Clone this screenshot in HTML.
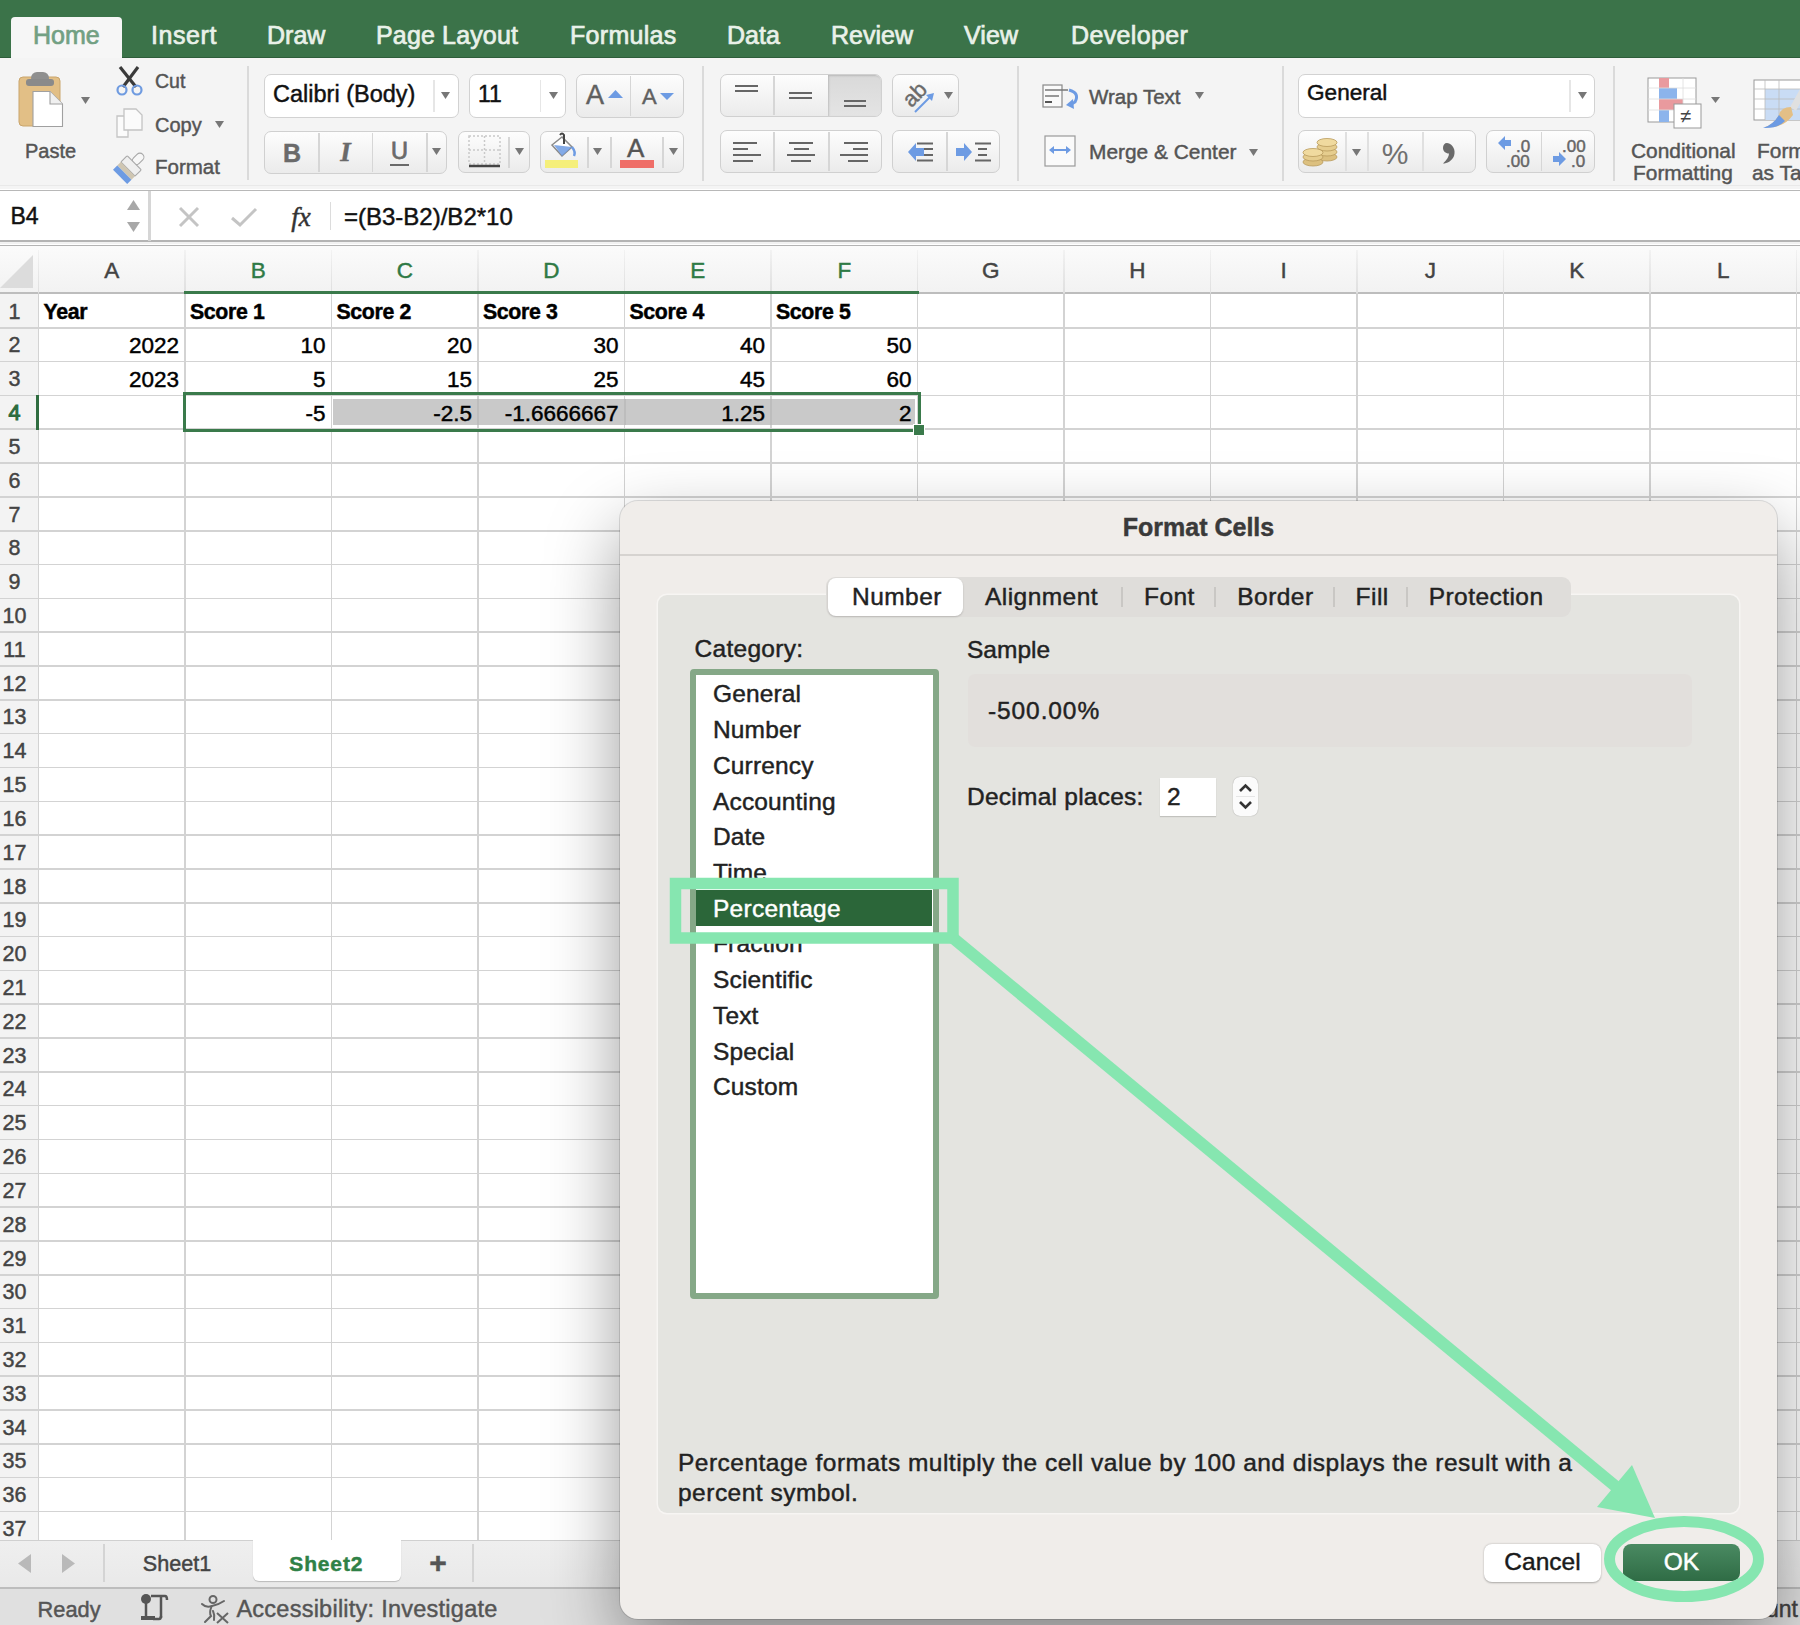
<!DOCTYPE html><html><head><meta charset="utf-8"><style>
html,body{margin:0;padding:0;width:1800px;height:1625px;overflow:hidden;background:#fff;font-family:"Liberation Sans",sans-serif;}
#root{position:relative;width:1800px;height:1625px;overflow:hidden;}
</style></head><body><div id="root">
<div style="position:absolute;left:0.00px;top:0.00px;width:1800.00px;height:58.00px;background:#3b7349;"></div>
<div style="position:absolute;left:0.00px;top:56.50px;width:1800.00px;height:1.50px;background:#2e5d3a;"></div>
<div style="position:absolute;left:11.00px;top:17.00px;width:111.00px;height:41.00px;background:#f6f6f6;border-radius:4px 4px 0 0;"></div>
<div style="position:absolute;top:23.05px;font-size:25px;line-height:25px;font-weight:normal;color:#72a083;white-space:nowrap;font-family:'Liberation Sans', sans-serif;-webkit-text-stroke:0.7px #72a083;left:33.00px;">Home</div>
<div style="position:absolute;top:23.05px;font-size:25px;line-height:25px;font-weight:normal;color:#e9f1e9;white-space:nowrap;font-family:'Liberation Sans', sans-serif;letter-spacing:0.58px;-webkit-text-stroke:0.7px #e9f1e9;left:151.00px;">Insert</div>
<div style="position:absolute;top:23.05px;font-size:25px;line-height:25px;font-weight:normal;color:#e9f1e9;white-space:nowrap;font-family:'Liberation Sans', sans-serif;-webkit-text-stroke:0.7px #e9f1e9;left:267.00px;">Draw</div>
<div style="position:absolute;top:23.05px;font-size:25px;line-height:25px;font-weight:normal;color:#e9f1e9;white-space:nowrap;font-family:'Liberation Sans', sans-serif;letter-spacing:0.15px;-webkit-text-stroke:0.7px #e9f1e9;left:376.00px;">Page Layout</div>
<div style="position:absolute;top:23.05px;font-size:25px;line-height:25px;font-weight:normal;color:#e9f1e9;white-space:nowrap;font-family:'Liberation Sans', sans-serif;letter-spacing:0.3px;-webkit-text-stroke:0.7px #e9f1e9;left:570.00px;">Formulas</div>
<div style="position:absolute;top:23.05px;font-size:25px;line-height:25px;font-weight:normal;color:#e9f1e9;white-space:nowrap;font-family:'Liberation Sans', sans-serif;-webkit-text-stroke:0.7px #e9f1e9;left:727.00px;">Data</div>
<div style="position:absolute;top:23.05px;font-size:25px;line-height:25px;font-weight:normal;color:#e9f1e9;white-space:nowrap;font-family:'Liberation Sans', sans-serif;-webkit-text-stroke:0.7px #e9f1e9;left:831.00px;">Review</div>
<div style="position:absolute;top:23.05px;font-size:25px;line-height:25px;font-weight:normal;color:#e9f1e9;white-space:nowrap;font-family:'Liberation Sans', sans-serif;letter-spacing:0.1px;-webkit-text-stroke:0.7px #e9f1e9;left:964.00px;">View</div>
<div style="position:absolute;top:23.05px;font-size:25px;line-height:25px;font-weight:normal;color:#e9f1e9;white-space:nowrap;font-family:'Liberation Sans', sans-serif;letter-spacing:0.37px;-webkit-text-stroke:0.7px #e9f1e9;left:1071.00px;">Developer</div>
<div style="position:absolute;left:0.00px;top:58.00px;width:1800.00px;height:131.00px;background:#f4f4f4;"></div>
<div style="position:absolute;left:0.00px;top:185.00px;width:1800.00px;height:1.00px;background:#e9e9e9;"></div>
<div style="position:absolute;left:0.00px;top:189.50px;width:1800.00px;height:1.50px;background:#b8b8b8;"></div>
<svg style="position:absolute;left:17px;top:69px" width="50" height="62">
<rect x="2" y="8" width="41" height="49" rx="4" fill="#e2bf86" stroke="#c9a56c" stroke-width="1"/>
<rect x="14" y="3" width="18" height="12" rx="6" fill="#8f8f8f"/>
<rect x="9" y="10" width="28" height="7" rx="3" fill="#8a8a8a"/>
<path d="M16,22.5 L33,22.5 L45.5,35 L45.5,57.5 L16,57.5 Z" fill="#fff" stroke="#a0a0a0" stroke-width="1.1"/>
<path d="M33,22.5 L33,35 L45.5,35" fill="#f0f0f0" stroke="#a0a0a0" stroke-width="1.1"/>
</svg>
<svg style="position:absolute;left:81px;top:97px" width="9" height="7"><polygon points="0,0 9,0 4.5,7" fill="#777"/></svg>
<div style="position:absolute;top:141.40px;font-size:20px;line-height:20px;font-weight:normal;color:#555;white-space:nowrap;font-family:'Liberation Sans', sans-serif;-webkit-text-stroke:0.45px #555;left:25.00px;">Paste</div>
<svg style="position:absolute;left:114px;top:64px" width="34" height="34">
<line x1="6" y1="3" x2="22" y2="23" stroke="#3a3a3a" stroke-width="3.2"/>
<line x1="24" y1="3" x2="9" y2="23" stroke="#3a3a3a" stroke-width="3.2"/>
<circle cx="8" cy="26" r="4.5" fill="none" stroke="#6f9be0" stroke-width="2.2"/>
<circle cx="23" cy="26" r="4.5" fill="none" stroke="#6f9be0" stroke-width="2.2"/>
</svg>
<div style="position:absolute;top:72.20px;font-size:19.5px;line-height:19.5px;font-weight:normal;color:#555;white-space:nowrap;font-family:'Liberation Sans', sans-serif;-webkit-text-stroke:0.45px #555;left:155.00px;">Cut</div>
<svg style="position:absolute;left:114px;top:106px" width="34" height="34">
<path d="M3,10 L14,10 L14,31 L3,31 Z" fill="#fbfbfb" stroke="#c4c4c4" stroke-width="1.3"/>
<path d="M10,3 L22,3 L28,9 L28,24 L10,24 Z" fill="#fbfbfb" stroke="#c4c4c4" stroke-width="1.3"/>
</svg>
<div style="position:absolute;top:115.40px;font-size:20px;line-height:20px;font-weight:normal;color:#555;white-space:nowrap;font-family:'Liberation Sans', sans-serif;-webkit-text-stroke:0.45px #555;left:155.00px;">Copy</div>
<svg style="position:absolute;left:215px;top:121px" width="9" height="7"><polygon points="0,0 9,0 4.5,7" fill="#777"/></svg>
<svg style="position:absolute;left:110px;top:149px" width="40" height="36">
<g transform="rotate(45 20 18)">
<rect x="16" y="0" width="8" height="13" rx="4" fill="#f7f7f7" stroke="#a8a8a8" stroke-width="1.1"/>
<rect x="10" y="12" width="20" height="9" rx="1" fill="#efefef" stroke="#a8a8a8" stroke-width="1.1"/>
<rect x="10" y="21" width="20" height="5" fill="#cfc6b2"/>
<rect x="10" y="26" width="20" height="6" fill="#6d9be3"/>
</g>
</svg>
<div style="position:absolute;top:157.40px;font-size:20.5px;line-height:20.5px;font-weight:normal;color:#555;white-space:nowrap;font-family:'Liberation Sans', sans-serif;-webkit-text-stroke:0.45px #555;left:155.00px;">Format</div>
<div style="position:absolute;left:247.00px;top:66.00px;width:1.50px;height:114.00px;background:#dadada;"></div>
<div style="position:absolute;left:264.00px;top:74.00px;width:195.00px;height:44.00px;box-sizing:border-box;background:#fff;border:1.5px solid #d2d2d2;border-radius:7px;"></div>
<div style="position:absolute;top:82.67px;font-size:23.5px;line-height:23.5px;font-weight:normal;color:#111;white-space:nowrap;font-family:'Liberation Sans', sans-serif;-webkit-text-stroke:0.45px #111;left:273.00px;">Calibri (Body)</div>
<div style="position:absolute;left:433.00px;top:80.00px;width:1.50px;height:32.00px;background:#e6e6e6;"></div>
<svg style="position:absolute;left:441px;top:92px" width="9" height="7"><polygon points="0,0 9,0 4.5,7" fill="#777"/></svg>
<div style="position:absolute;left:469.00px;top:74.00px;width:97.00px;height:44.00px;box-sizing:border-box;background:#fff;border:1.5px solid #d2d2d2;border-radius:7px;"></div>
<div style="position:absolute;top:82.57px;font-size:23px;line-height:23px;font-weight:normal;color:#111;white-space:nowrap;font-family:'Liberation Sans', sans-serif;-webkit-text-stroke:0.45px #111;left:478.00px;">11</div>
<div style="position:absolute;left:539.50px;top:80.00px;width:1.50px;height:32.00px;background:#e6e6e6;"></div>
<svg style="position:absolute;left:549px;top:92px" width="9" height="7"><polygon points="0,0 9,0 4.5,7" fill="#777"/></svg>
<div style="position:absolute;left:576.00px;top:74.00px;width:108.00px;height:44.00px;box-sizing:border-box;background:linear-gradient(#fdfdfd,#ebebeb);border:1.5px solid #d0d0d0;border-radius:7px;"></div>
<div style="position:absolute;left:629.50px;top:76.00px;width:1.50px;height:40.00px;background:#d6d6d6;"></div>
<div style="position:absolute;top:82.43px;font-size:27px;line-height:27px;font-weight:normal;color:#606060;white-space:nowrap;font-family:'Liberation Sans', sans-serif;-webkit-text-stroke:0.45px #606060;left:586.00px;">A</div>
<svg style="position:absolute;left:608px;top:90px" width="15" height="8"><polygon points="0,8 15,8 7.5,0" fill="#6d9be3"/></svg>
<div style="position:absolute;top:86.18px;font-size:22px;line-height:22px;font-weight:normal;color:#606060;white-space:nowrap;font-family:'Liberation Sans', sans-serif;-webkit-text-stroke:0.45px #606060;left:642.00px;">A</div>
<svg style="position:absolute;left:660px;top:93px" width="14" height="7"><polygon points="0,0 14,0 7,7" fill="#6d9be3"/></svg>
<div style="position:absolute;left:264.00px;top:131.00px;width:183.00px;height:43.00px;box-sizing:border-box;background:linear-gradient(#fdfdfd,#ebebeb);border:1.5px solid #d0d0d0;border-radius:7px;"></div>
<div style="position:absolute;left:318.00px;top:133.00px;width:1.50px;height:39.00px;background:#d6d6d6;"></div>
<div style="position:absolute;left:371.50px;top:133.00px;width:1.50px;height:39.00px;background:#d6d6d6;"></div>
<div style="position:absolute;left:426.00px;top:133.00px;width:1.50px;height:39.00px;background:#d6d6d6;"></div>
<div style="position:absolute;top:140.75px;font-size:25px;line-height:25px;font-weight:bold;color:#6a6a6a;white-space:nowrap;font-family:'Liberation Sans', sans-serif;-webkit-text-stroke:0.45px #6a6a6a;left:283.00px;">B</div>
<div style="position:absolute;top:139.13px;font-size:27px;line-height:27px;font-weight:bold;color:#6a6a6a;white-space:nowrap;font-family:'Liberation Serif', serif;-webkit-text-stroke:0.45px #6a6a6a;left:325.50px;width:40px;text-align:center;font-style:italic;">I</div>
<div style="position:absolute;top:140.16px;font-size:23.5px;line-height:23.5px;font-weight:normal;color:#6a6a6a;white-space:nowrap;font-family:'Liberation Sans', sans-serif;-webkit-text-stroke:0.8px #6a6a6a;left:379.50px;width:40px;text-align:center;">U</div>
<div style="position:absolute;left:390.00px;top:163.50px;width:19.00px;height:2.50px;background:#6a6a6a;"></div>
<svg style="position:absolute;left:432px;top:148px" width="9" height="7"><polygon points="0,0 9,0 4.5,7" fill="#777"/></svg>
<div style="position:absolute;left:458.00px;top:131.00px;width:72.00px;height:42.00px;box-sizing:border-box;background:linear-gradient(#fdfdfd,#ebebeb);border:1.5px solid #d0d0d0;border-radius:7px;"></div>
<div style="position:absolute;left:508.00px;top:137.00px;width:1.50px;height:31.00px;background:#d6d6d6;"></div>
<svg style="position:absolute;left:468px;top:134px" width="34" height="34">
<rect x="1" y="2" width="31" height="28" fill="none" stroke="#c9c9c9" stroke-width="1.5" stroke-dasharray="2,2"/>
<line x1="16.5" y1="2" x2="16.5" y2="30" stroke="#c9c9c9" stroke-width="1.5" stroke-dasharray="2,2"/>
<line x1="1" y1="16" x2="32" y2="16" stroke="#c9c9c9" stroke-width="1.5" stroke-dasharray="2,2"/>
<line x1="1" y1="32" x2="32" y2="32" stroke="#444" stroke-width="2.5"/>
</svg>
<svg style="position:absolute;left:515px;top:148px" width="9" height="7"><polygon points="0,0 9,0 4.5,7" fill="#777"/></svg>
<div style="position:absolute;left:540.00px;top:131.00px;width:144.00px;height:42.00px;box-sizing:border-box;background:linear-gradient(#fdfdfd,#ebebeb);border:1.5px solid #d0d0d0;border-radius:7px;"></div>
<div style="position:absolute;left:587.00px;top:137.00px;width:1.50px;height:31.00px;background:#d6d6d6;"></div>
<div style="position:absolute;left:610.00px;top:137.00px;width:1.50px;height:31.00px;background:#d6d6d6;"></div>
<div style="position:absolute;left:662.00px;top:137.00px;width:1.50px;height:31.00px;background:#d6d6d6;"></div>
<div style="position:absolute;left:545.00px;top:160.00px;width:33.00px;height:8.00px;background:#f5ef7a;"></div>
<svg style="position:absolute;left:548px;top:132px" width="32" height="28">
<path d="M4,13 L14,5 L24,15 L14,24 Z" fill="#fff" stroke="#8a8a8a" stroke-width="1.5"/>
<path d="M12,3 Q14,0 16,3 L16,12" fill="none" stroke="#444" stroke-width="2"/>
<path d="M6,13 L24,15 L14,24 Z" fill="#6d9be3" opacity="0.85"/>
<path d="M24,15 Q28,20 26,24" fill="none" stroke="#6d9be3" stroke-width="2.5"/>
</svg>
<svg style="position:absolute;left:593px;top:148px" width="9" height="7"><polygon points="0,0 9,0 4.5,7" fill="#777"/></svg>
<div style="position:absolute;top:134.54px;font-size:26px;line-height:26px;font-weight:normal;color:#555;white-space:nowrap;font-family:'Liberation Sans', sans-serif;-webkit-text-stroke:0.45px #555;left:627.00px;">A</div>
<div style="position:absolute;left:620.00px;top:160.00px;width:34.00px;height:8.00px;background:#ef6e68;"></div>
<svg style="position:absolute;left:669px;top:148px" width="9" height="7"><polygon points="0,0 9,0 4.5,7" fill="#777"/></svg>
<div style="position:absolute;left:702.00px;top:66.00px;width:1.50px;height:115.00px;background:#dadada;"></div>
<div style="position:absolute;left:720.00px;top:74.00px;width:162.00px;height:43.00px;box-sizing:border-box;background:linear-gradient(#fdfdfd,#ebebeb);border:1.5px solid #d0d0d0;border-radius:7px;overflow:hidden;"></div>
<div style="position:absolute;left:828.00px;top:75.00px;width:53.00px;height:41.00px;background:linear-gradient(#d9d9d9,#e4e4e4);border-radius:0 6px 6px 0;box-shadow:inset 1px 1px 2px rgba(0,0,0,0.15);"></div>
<div style="position:absolute;left:773.00px;top:76.00px;width:1.50px;height:39.00px;background:#d6d6d6;"></div>
<div style="position:absolute;left:735.00px;top:85.00px;width:23.00px;height:2.00px;background:#666;"></div>
<div style="position:absolute;left:735.00px;top:90.00px;width:23.00px;height:2.00px;background:#666;"></div>
<div style="position:absolute;left:789.00px;top:92.00px;width:23.00px;height:2.00px;background:#666;"></div>
<div style="position:absolute;left:789.00px;top:97.00px;width:23.00px;height:2.00px;background:#666;"></div>
<div style="position:absolute;left:844.00px;top:99.50px;width:22.00px;height:2.00px;background:#666;"></div>
<div style="position:absolute;left:844.00px;top:105.00px;width:22.00px;height:2.00px;background:#666;"></div>
<div style="position:absolute;left:892.00px;top:74.00px;width:67.00px;height:43.00px;box-sizing:border-box;background:linear-gradient(#fdfdfd,#ebebeb);border:1.5px solid #d0d0d0;border-radius:7px;"></div>
<svg style="position:absolute;left:900px;top:78px" width="40" height="36">
<text x="2" y="24" font-family="Liberation Sans" font-size="22" fill="#6b6b6b" stroke="#6b6b6b" stroke-width="0.4" transform="rotate(-45 14 16)">ab</text>
<line x1="15" y1="34" x2="31" y2="18" stroke="#6d9be3" stroke-width="2"/>
<polygon points="34,15 26,17 32,23" fill="#6d9be3"/>
</svg>
<svg style="position:absolute;left:944px;top:92px" width="9" height="7"><polygon points="0,0 9,0 4.5,7" fill="#777"/></svg>
<div style="position:absolute;left:720.00px;top:130.00px;width:162.00px;height:43.00px;box-sizing:border-box;background:linear-gradient(#fdfdfd,#ebebeb);border:1.5px solid #d0d0d0;border-radius:7px;"></div>
<div style="position:absolute;left:773.00px;top:132.00px;width:1.50px;height:39.00px;background:#d6d6d6;"></div>
<div style="position:absolute;left:828.00px;top:132.00px;width:1.50px;height:39.00px;background:#d6d6d6;"></div>
<div style="position:absolute;left:733.00px;top:142.20px;width:24.00px;height:2.00px;background:#666;"></div>
<div style="position:absolute;left:733.00px;top:147.90px;width:15.00px;height:2.00px;background:#666;"></div>
<div style="position:absolute;left:733.00px;top:153.80px;width:28.00px;height:2.00px;background:#666;"></div>
<div style="position:absolute;left:733.00px;top:159.60px;width:20.00px;height:2.00px;background:#666;"></div>
<div style="position:absolute;left:789.00px;top:142.20px;width:24.00px;height:2.00px;background:#666;"></div>
<div style="position:absolute;left:793.50px;top:147.90px;width:15.00px;height:2.00px;background:#666;"></div>
<div style="position:absolute;left:787.00px;top:153.80px;width:28.00px;height:2.00px;background:#666;"></div>
<div style="position:absolute;left:791.00px;top:159.60px;width:20.00px;height:2.00px;background:#666;"></div>
<div style="position:absolute;left:844.00px;top:142.20px;width:24.00px;height:2.00px;background:#666;"></div>
<div style="position:absolute;left:853.00px;top:147.90px;width:15.00px;height:2.00px;background:#666;"></div>
<div style="position:absolute;left:840.00px;top:153.80px;width:28.00px;height:2.00px;background:#666;"></div>
<div style="position:absolute;left:848.00px;top:159.60px;width:20.00px;height:2.00px;background:#666;"></div>
<div style="position:absolute;left:892.00px;top:130.00px;width:108.00px;height:43.00px;box-sizing:border-box;background:linear-gradient(#fdfdfd,#ebebeb);border:1.5px solid #d0d0d0;border-radius:7px;"></div>
<div style="position:absolute;left:946.00px;top:132.00px;width:1.50px;height:39.00px;background:#d6d6d6;"></div>
<svg style="position:absolute;left:902px;top:139px" width="36" height="26">
<polygon points="14,4 14,9 22,9 22,17 14,17 14,22 6,13" fill="#6d9be3"/>
<rect x="15" y="3.5" width="16" height="2" fill="#666"/>
<rect x="22" y="9" width="9" height="2" fill="#666"/>
<rect x="22" y="15" width="9" height="2" fill="#666"/>
<rect x="15" y="20.5" width="16" height="2" fill="#666"/>
</svg>
<svg style="position:absolute;left:956px;top:139px" width="36" height="26">
<polygon points="8,4 16,13 8,22 8,17 0,17 0,9 8,9" fill="#6d9be3"/>
<rect x="19" y="3.5" width="16" height="2" fill="#666"/>
<rect x="22" y="9" width="9" height="2" fill="#666"/>
<rect x="22" y="15" width="9" height="2" fill="#666"/>
<rect x="19" y="20.5" width="16" height="2" fill="#666"/>
</svg>
<div style="position:absolute;left:1017.00px;top:66.00px;width:1.50px;height:115.00px;background:#dadada;"></div>
<svg style="position:absolute;left:1042px;top:84px" width="40" height="26">
<rect x="1" y="1" width="19" height="22" fill="#fafafa" stroke="#888" stroke-width="1.2"/>
<line x1="3" y1="6" x2="26" y2="6" stroke="#777" stroke-width="1.5"/>
<line x1="3" y1="12" x2="17" y2="12" stroke="#777" stroke-width="1.5"/>
<line x1="3" y1="18" x2="10" y2="18" stroke="#555" stroke-width="2"/>
<path d="M27,6 Q38,9 33,18 L28,21" fill="none" stroke="#6d9be3" stroke-width="3"/>
<polygon points="24,21 31,15 32,25" fill="#6d9be3"/>
</svg>
<div style="position:absolute;top:86.89px;font-size:20.5px;line-height:20.5px;font-weight:normal;color:#555;white-space:nowrap;font-family:'Liberation Sans', sans-serif;-webkit-text-stroke:0.45px #555;left:1089.00px;">Wrap Text</div>
<svg style="position:absolute;left:1195px;top:92px" width="9" height="7"><polygon points="0,0 9,0 4.5,7" fill="#777"/></svg>
<svg style="position:absolute;left:1044px;top:135px" width="34" height="33">
<rect x="1" y="1" width="30" height="30" fill="#fafafa" stroke="#999" stroke-width="1.2"/>
<line x1="7" y1="15" x2="25" y2="15" stroke="#6d9be3" stroke-width="2"/>
<polygon points="5,15 10,11 10,19" fill="#6d9be3"/>
<polygon points="27,15 22,11 22,19" fill="#6d9be3"/>
</svg>
<div style="position:absolute;top:142.17px;font-size:20.9px;line-height:20.9px;font-weight:normal;color:#555;white-space:nowrap;font-family:'Liberation Sans', sans-serif;-webkit-text-stroke:0.45px #555;left:1089.00px;">Merge &amp; Center</div>
<svg style="position:absolute;left:1249px;top:149px" width="9" height="7"><polygon points="0,0 9,0 4.5,7" fill="#777"/></svg>
<div style="position:absolute;left:1282.00px;top:66.00px;width:1.50px;height:115.00px;background:#dadada;"></div>
<div style="position:absolute;left:1298.00px;top:74.00px;width:297.00px;height:44.00px;box-sizing:border-box;background:#fff;border:1.5px solid #d2d2d2;border-radius:7px;"></div>
<div style="position:absolute;top:82.29px;font-size:22.6px;line-height:22.6px;font-weight:normal;color:#111;white-space:nowrap;font-family:'Liberation Sans', sans-serif;-webkit-text-stroke:0.45px #111;left:1307.00px;">General</div>
<div style="position:absolute;left:1569.00px;top:80.00px;width:1.50px;height:32.00px;background:#e6e6e6;"></div>
<svg style="position:absolute;left:1578px;top:92px" width="9" height="7"><polygon points="0,0 9,0 4.5,7" fill="#777"/></svg>
<div style="position:absolute;left:1298.00px;top:130.00px;width:178.00px;height:43.00px;box-sizing:border-box;background:linear-gradient(#fdfdfd,#ebebeb);border:1.5px solid #d0d0d0;border-radius:7px;"></div>
<div style="position:absolute;left:1345.00px;top:132.00px;width:1.50px;height:39.00px;background:#e0e0e0;"></div>
<div style="position:absolute;left:1367.00px;top:132.00px;width:1.50px;height:39.00px;background:#e0e0e0;"></div>
<div style="position:absolute;left:1422.00px;top:132.00px;width:1.50px;height:39.00px;background:#e0e0e0;"></div>
<svg style="position:absolute;left:1301px;top:137px" width="38" height="32">
<g stroke="#b99a5c" stroke-width="0.8">
<ellipse cx="26" cy="20" rx="10" ry="4" fill="#dcc07f"/>
<ellipse cx="26" cy="15" rx="10" ry="4" fill="#e6cd8e"/>
<ellipse cx="26" cy="10" rx="10" ry="4" fill="#e6cd8e"/>
<ellipse cx="26" cy="5.5" rx="10" ry="4" fill="#f0da9f"/>
<ellipse cx="12" cy="25" rx="10" ry="4" fill="#dcc07f"/>
<ellipse cx="12" cy="20" rx="10" ry="4" fill="#e6cd8e"/>
<ellipse cx="12" cy="15.5" rx="10" ry="4" fill="#f0da9f"/>
</g>
</svg>
<svg style="position:absolute;left:1352px;top:149px" width="9" height="7"><polygon points="0,0 9,0 4.5,7" fill="#777"/></svg>
<div style="position:absolute;top:138.70px;font-size:30px;line-height:30px;font-weight:normal;color:#707070;white-space:nowrap;font-family:'Liberation Sans', sans-serif;left:1375.00px;width:40px;text-align:center;">%</div>
<svg style="position:absolute;left:1441px;top:142px" width="18" height="23"><path d="M6,1 C12,2 15,8 13,14 C11,19 6,21.5 2,21.5 C6,18 8,14 8,11.5 C4.5,11.5 2,9 2,6 C2,3 3.5,1 6,1 Z" fill="#6a6a6a"/></svg>
<div style="position:absolute;left:1486.00px;top:130.00px;width:109.00px;height:43.00px;box-sizing:border-box;background:linear-gradient(#fdfdfd,#ebebeb);border:1.5px solid #d0d0d0;border-radius:7px;"></div>
<div style="position:absolute;left:1540.50px;top:132.00px;width:1.50px;height:39.00px;background:#d6d6d6;"></div>
<div style="position:absolute;top:138.23px;font-size:17px;line-height:17px;font-weight:normal;color:#666;white-space:nowrap;font-family:'Liberation Sans', sans-serif;-webkit-text-stroke:0.45px #666;left:1516.00px;">.0</div>
<div style="position:absolute;top:153.23px;font-size:17px;line-height:17px;font-weight:normal;color:#666;white-space:nowrap;font-family:'Liberation Sans', sans-serif;-webkit-text-stroke:0.45px #666;left:1506.00px;">.00</div>
<svg style="position:absolute;left:1498px;top:136px" width="14" height="14"><polygon points="0,7 7,0 7,4 13,4 13,10 7,10 7,14" fill="#6d9be3"/></svg>
<div style="position:absolute;top:138.23px;font-size:17px;line-height:17px;font-weight:normal;color:#666;white-space:nowrap;font-family:'Liberation Sans', sans-serif;-webkit-text-stroke:0.45px #666;left:1562.00px;">.00</div>
<div style="position:absolute;top:153.23px;font-size:17px;line-height:17px;font-weight:normal;color:#666;white-space:nowrap;font-family:'Liberation Sans', sans-serif;-webkit-text-stroke:0.45px #666;left:1571.00px;">.0</div>
<svg style="position:absolute;left:1553px;top:152px" width="14" height="14"><polygon points="13,7 6,0 6,4 0,4 0,10 6,10 6,14" fill="#6d9be3"/></svg>
<div style="position:absolute;left:1613.00px;top:66.00px;width:1.50px;height:115.00px;background:#dadada;"></div>
<svg style="position:absolute;left:1647px;top:77px" width="58" height="54">
<rect x="1" y="1" width="48" height="44" fill="#fff" stroke="#999" stroke-width="1"/>
<rect x="12" y="1" width="10" height="10" fill="#e99a9e"/>
<rect x="12" y="11" width="18" height="11" fill="#8cb4ec"/>
<rect x="12" y="22" width="24" height="11" fill="#e99a9e"/>
<rect x="12" y="33" width="10" height="12" fill="#8cb4ec"/>
<line x1="1" y1="11" x2="49" y2="11" stroke="#ddd" stroke-width="0.8"/>
<line x1="1" y1="22" x2="49" y2="22" stroke="#ddd" stroke-width="0.8"/>
<line x1="1" y1="33" x2="49" y2="33" stroke="#ddd" stroke-width="0.8"/>
<line x1="36" y1="1" x2="36" y2="45" stroke="#ddd" stroke-width="0.8"/>
<rect x="27" y="27" width="27" height="24" fill="#fff" stroke="#999" stroke-width="1"/>
<text x="33" y="46" font-family="Liberation Sans" font-size="20" fill="#444">&#8800;</text>
</svg>
<svg style="position:absolute;left:1711px;top:97px" width="9" height="6"><polygon points="0,0 9,0 4.5,6" fill="#777"/></svg>
<div style="position:absolute;top:140.77px;font-size:20.9px;line-height:20.9px;font-weight:normal;color:#555;white-space:nowrap;font-family:'Liberation Sans', sans-serif;-webkit-text-stroke:0.45px #555;left:1631.00px;">Conditional</div>
<div style="position:absolute;top:163.07px;font-size:20.9px;line-height:20.9px;font-weight:normal;color:#555;white-space:nowrap;font-family:'Liberation Sans', sans-serif;-webkit-text-stroke:0.45px #555;left:1633.00px;">Formatting</div>
<svg style="position:absolute;left:1753px;top:79px" width="47" height="52">
<rect x="1" y="1" width="60" height="40" fill="#fff" stroke="#999" stroke-width="1"/>
<rect x="12" y="10" width="50" height="31" fill="#c9dcf5"/>
<line x1="1" y1="10" x2="62" y2="10" stroke="#bbb" stroke-width="0.8"/>
<line x1="1" y1="20" x2="62" y2="20" stroke="#bbb" stroke-width="0.8"/>
<line x1="1" y1="30" x2="62" y2="30" stroke="#bbb" stroke-width="0.8"/>
<line x1="12" y1="1" x2="12" y2="41" stroke="#bbb" stroke-width="0.8"/>
<line x1="26" y1="1" x2="26" y2="41" stroke="#bbb" stroke-width="0.8"/>
<path d="M50,12 L40,30" stroke="#e0e0e0" stroke-width="7"/>
<path d="M38,28 Q28,28 26,36 Q20,46 12,48 Q30,50 40,36 Z" fill="#e3bf86"/>
<path d="M26,36 Q20,46 10,49 Q24,50 32,42 Z" fill="#6d9be3"/>
</svg>
<div style="position:absolute;top:140.77px;font-size:20.9px;line-height:20.9px;font-weight:normal;color:#555;white-space:nowrap;font-family:'Liberation Sans', sans-serif;-webkit-text-stroke:0.45px #555;left:1757.00px;">Form</div>
<div style="position:absolute;top:163.07px;font-size:20.9px;line-height:20.9px;font-weight:normal;color:#555;white-space:nowrap;font-family:'Liberation Sans', sans-serif;-webkit-text-stroke:0.45px #555;left:1752.00px;">as Ta</div>
<div style="position:absolute;left:0.00px;top:191.00px;width:1800.00px;height:50.00px;background:#fff;"></div>
<div style="position:absolute;left:0.00px;top:240.20px;width:1800.00px;height:1.60px;background:#b4b4b4;"></div>
<div style="position:absolute;left:0.00px;top:241.80px;width:1800.00px;height:2.70px;background:#f2f2f2;"></div>
<div style="position:absolute;left:0.00px;top:244.50px;width:1800.00px;height:1.60px;background:#b4b4b4;"></div>
<div style="position:absolute;left:148.00px;top:191.00px;width:3.00px;height:50.00px;background:#d6d6d6;"></div>
<div style="position:absolute;top:204.87px;font-size:23px;line-height:23px;font-weight:normal;color:#111;white-space:nowrap;font-family:'Liberation Sans', sans-serif;-webkit-text-stroke:0.45px #111;left:10.50px;">B4</div>
<svg style="position:absolute;left:127px;top:200px" width="14" height="32"><polygon points="0,10 13,10 6.5,0" fill="#a8a8a8"/><polygon points="0,22 13,22 6.5,32" fill="#a8a8a8"/></svg>
<svg style="position:absolute;left:178px;top:206px" width="82" height="22"><line x1="2" y1="2" x2="20" y2="20" stroke="#c4c4c4" stroke-width="3"/><line x1="20" y1="2" x2="2" y2="20" stroke="#c4c4c4" stroke-width="3"/><polyline points="54,12 62,19 78,3" fill="none" stroke="#c4c4c4" stroke-width="3"/></svg>
<div style="position:absolute;top:204.13px;font-size:27px;line-height:27px;font-weight:normal;color:#333;white-space:nowrap;font-family:'Liberation Serif', serif;-webkit-text-stroke:0.45px #333;left:281.00px;width:40px;text-align:center;"><i>fx</i></div>
<div style="position:absolute;left:329.50px;top:202.00px;width:1.50px;height:28.00px;background:#dcdcdc;"></div>
<div style="position:absolute;top:205.46px;font-size:24px;line-height:24px;font-weight:normal;color:#111;white-space:nowrap;font-family:'Liberation Sans', sans-serif;-webkit-text-stroke:0.45px #111;left:344.00px;">=(B3-B2)/B2*10</div>
<div style="position:absolute;left:0.00px;top:246.00px;width:1800.00px;height:47.00px;background:linear-gradient(#fbfbfb,#f2f2f2);"></div>
<div style="position:absolute;left:0.00px;top:293.00px;width:38.00px;height:1247.00px;background:#f3f3f3;"></div>
<div style="position:absolute;left:0.00px;top:292.20px;width:1800.00px;height:1.60px;background:#bdbdbd;"></div>
<div style="position:absolute;left:0.00px;top:327.02px;width:1800.00px;height:1.60px;background:#d3d3d3;"></div>
<div style="position:absolute;left:0.00px;top:360.84px;width:1800.00px;height:1.60px;background:#d3d3d3;"></div>
<div style="position:absolute;left:0.00px;top:394.66px;width:1800.00px;height:1.60px;background:#d3d3d3;"></div>
<div style="position:absolute;left:0.00px;top:428.48px;width:1800.00px;height:1.60px;background:#d3d3d3;"></div>
<div style="position:absolute;left:0.00px;top:462.30px;width:1800.00px;height:1.60px;background:#d3d3d3;"></div>
<div style="position:absolute;left:0.00px;top:496.12px;width:1800.00px;height:1.60px;background:#d3d3d3;"></div>
<div style="position:absolute;left:0.00px;top:529.94px;width:1800.00px;height:1.60px;background:#d3d3d3;"></div>
<div style="position:absolute;left:0.00px;top:563.76px;width:1800.00px;height:1.60px;background:#d3d3d3;"></div>
<div style="position:absolute;left:0.00px;top:597.58px;width:1800.00px;height:1.60px;background:#d3d3d3;"></div>
<div style="position:absolute;left:0.00px;top:631.40px;width:1800.00px;height:1.60px;background:#d3d3d3;"></div>
<div style="position:absolute;left:0.00px;top:665.22px;width:1800.00px;height:1.60px;background:#d3d3d3;"></div>
<div style="position:absolute;left:0.00px;top:699.04px;width:1800.00px;height:1.60px;background:#d3d3d3;"></div>
<div style="position:absolute;left:0.00px;top:732.86px;width:1800.00px;height:1.60px;background:#d3d3d3;"></div>
<div style="position:absolute;left:0.00px;top:766.68px;width:1800.00px;height:1.60px;background:#d3d3d3;"></div>
<div style="position:absolute;left:0.00px;top:800.50px;width:1800.00px;height:1.60px;background:#d3d3d3;"></div>
<div style="position:absolute;left:0.00px;top:834.32px;width:1800.00px;height:1.60px;background:#d3d3d3;"></div>
<div style="position:absolute;left:0.00px;top:868.14px;width:1800.00px;height:1.60px;background:#d3d3d3;"></div>
<div style="position:absolute;left:0.00px;top:901.96px;width:1800.00px;height:1.60px;background:#d3d3d3;"></div>
<div style="position:absolute;left:0.00px;top:935.78px;width:1800.00px;height:1.60px;background:#d3d3d3;"></div>
<div style="position:absolute;left:0.00px;top:969.60px;width:1800.00px;height:1.60px;background:#d3d3d3;"></div>
<div style="position:absolute;left:0.00px;top:1003.42px;width:1800.00px;height:1.60px;background:#d3d3d3;"></div>
<div style="position:absolute;left:0.00px;top:1037.24px;width:1800.00px;height:1.60px;background:#d3d3d3;"></div>
<div style="position:absolute;left:0.00px;top:1071.06px;width:1800.00px;height:1.60px;background:#d3d3d3;"></div>
<div style="position:absolute;left:0.00px;top:1104.88px;width:1800.00px;height:1.60px;background:#d3d3d3;"></div>
<div style="position:absolute;left:0.00px;top:1138.70px;width:1800.00px;height:1.60px;background:#d3d3d3;"></div>
<div style="position:absolute;left:0.00px;top:1172.52px;width:1800.00px;height:1.60px;background:#d3d3d3;"></div>
<div style="position:absolute;left:0.00px;top:1206.34px;width:1800.00px;height:1.60px;background:#d3d3d3;"></div>
<div style="position:absolute;left:0.00px;top:1240.16px;width:1800.00px;height:1.60px;background:#d3d3d3;"></div>
<div style="position:absolute;left:0.00px;top:1273.98px;width:1800.00px;height:1.60px;background:#d3d3d3;"></div>
<div style="position:absolute;left:0.00px;top:1307.80px;width:1800.00px;height:1.60px;background:#d3d3d3;"></div>
<div style="position:absolute;left:0.00px;top:1341.62px;width:1800.00px;height:1.60px;background:#d3d3d3;"></div>
<div style="position:absolute;left:0.00px;top:1375.44px;width:1800.00px;height:1.60px;background:#d3d3d3;"></div>
<div style="position:absolute;left:0.00px;top:1409.26px;width:1800.00px;height:1.60px;background:#d3d3d3;"></div>
<div style="position:absolute;left:0.00px;top:1443.08px;width:1800.00px;height:1.60px;background:#d3d3d3;"></div>
<div style="position:absolute;left:0.00px;top:1476.90px;width:1800.00px;height:1.60px;background:#d3d3d3;"></div>
<div style="position:absolute;left:0.00px;top:1510.72px;width:1800.00px;height:1.60px;background:#d3d3d3;"></div>
<div style="position:absolute;left:37.70px;top:293.00px;width:1.60px;height:1247.00px;background:#d3d3d3;"></div>
<div style="position:absolute;left:37.70px;top:250.00px;width:1.60px;height:43.00px;background:linear-gradient(rgba(225,225,225,0.3),#e0e0e0);"></div>
<div style="position:absolute;left:184.20px;top:293.00px;width:1.60px;height:1247.00px;background:#d3d3d3;"></div>
<div style="position:absolute;left:184.20px;top:250.00px;width:1.60px;height:43.00px;background:linear-gradient(rgba(225,225,225,0.3),#e0e0e0);"></div>
<div style="position:absolute;left:330.70px;top:293.00px;width:1.60px;height:1247.00px;background:#d3d3d3;"></div>
<div style="position:absolute;left:330.70px;top:250.00px;width:1.60px;height:43.00px;background:linear-gradient(rgba(225,225,225,0.3),#e0e0e0);"></div>
<div style="position:absolute;left:477.20px;top:293.00px;width:1.60px;height:1247.00px;background:#d3d3d3;"></div>
<div style="position:absolute;left:477.20px;top:250.00px;width:1.60px;height:43.00px;background:linear-gradient(rgba(225,225,225,0.3),#e0e0e0);"></div>
<div style="position:absolute;left:623.70px;top:293.00px;width:1.60px;height:1247.00px;background:#d3d3d3;"></div>
<div style="position:absolute;left:623.70px;top:250.00px;width:1.60px;height:43.00px;background:linear-gradient(rgba(225,225,225,0.3),#e0e0e0);"></div>
<div style="position:absolute;left:770.20px;top:293.00px;width:1.60px;height:1247.00px;background:#d3d3d3;"></div>
<div style="position:absolute;left:770.20px;top:250.00px;width:1.60px;height:43.00px;background:linear-gradient(rgba(225,225,225,0.3),#e0e0e0);"></div>
<div style="position:absolute;left:916.70px;top:293.00px;width:1.60px;height:1247.00px;background:#d3d3d3;"></div>
<div style="position:absolute;left:916.70px;top:250.00px;width:1.60px;height:43.00px;background:linear-gradient(rgba(225,225,225,0.3),#e0e0e0);"></div>
<div style="position:absolute;left:1063.20px;top:293.00px;width:1.60px;height:1247.00px;background:#d3d3d3;"></div>
<div style="position:absolute;left:1063.20px;top:250.00px;width:1.60px;height:43.00px;background:linear-gradient(rgba(225,225,225,0.3),#e0e0e0);"></div>
<div style="position:absolute;left:1209.70px;top:293.00px;width:1.60px;height:1247.00px;background:#d3d3d3;"></div>
<div style="position:absolute;left:1209.70px;top:250.00px;width:1.60px;height:43.00px;background:linear-gradient(rgba(225,225,225,0.3),#e0e0e0);"></div>
<div style="position:absolute;left:1356.20px;top:293.00px;width:1.60px;height:1247.00px;background:#d3d3d3;"></div>
<div style="position:absolute;left:1356.20px;top:250.00px;width:1.60px;height:43.00px;background:linear-gradient(rgba(225,225,225,0.3),#e0e0e0);"></div>
<div style="position:absolute;left:1502.70px;top:293.00px;width:1.60px;height:1247.00px;background:#d3d3d3;"></div>
<div style="position:absolute;left:1502.70px;top:250.00px;width:1.60px;height:43.00px;background:linear-gradient(rgba(225,225,225,0.3),#e0e0e0);"></div>
<div style="position:absolute;left:1649.20px;top:293.00px;width:1.60px;height:1247.00px;background:#d3d3d3;"></div>
<div style="position:absolute;left:1649.20px;top:250.00px;width:1.60px;height:43.00px;background:linear-gradient(rgba(225,225,225,0.3),#e0e0e0);"></div>
<div style="position:absolute;left:1795.70px;top:293.00px;width:1.60px;height:1247.00px;background:#d3d3d3;"></div>
<div style="position:absolute;left:1795.70px;top:250.00px;width:1.60px;height:43.00px;background:linear-gradient(rgba(225,225,225,0.3),#e0e0e0);"></div>
<svg style="position:absolute;left:0;top:255px" width="34" height="34"><polygon points="33,0 33,33 0,33" fill="#dcdcdc"/></svg>
<div style="position:absolute;top:260.07px;font-size:22.5px;line-height:22.5px;font-weight:normal;color:#444;white-space:nowrap;font-family:'Liberation Sans', sans-serif;-webkit-text-stroke:0.45px #444;left:61.75px;width:100px;text-align:center;">A</div>
<div style="position:absolute;top:260.07px;font-size:22.5px;line-height:22.5px;font-weight:normal;color:#2f7a45;white-space:nowrap;font-family:'Liberation Sans', sans-serif;-webkit-text-stroke:0.45px #2f7a45;left:208.25px;width:100px;text-align:center;">B</div>
<div style="position:absolute;top:260.07px;font-size:22.5px;line-height:22.5px;font-weight:normal;color:#2f7a45;white-space:nowrap;font-family:'Liberation Sans', sans-serif;-webkit-text-stroke:0.45px #2f7a45;left:354.75px;width:100px;text-align:center;">C</div>
<div style="position:absolute;top:260.07px;font-size:22.5px;line-height:22.5px;font-weight:normal;color:#2f7a45;white-space:nowrap;font-family:'Liberation Sans', sans-serif;-webkit-text-stroke:0.45px #2f7a45;left:501.25px;width:100px;text-align:center;">D</div>
<div style="position:absolute;top:260.07px;font-size:22.5px;line-height:22.5px;font-weight:normal;color:#2f7a45;white-space:nowrap;font-family:'Liberation Sans', sans-serif;-webkit-text-stroke:0.45px #2f7a45;left:647.75px;width:100px;text-align:center;">E</div>
<div style="position:absolute;top:260.07px;font-size:22.5px;line-height:22.5px;font-weight:normal;color:#2f7a45;white-space:nowrap;font-family:'Liberation Sans', sans-serif;-webkit-text-stroke:0.45px #2f7a45;left:794.25px;width:100px;text-align:center;">F</div>
<div style="position:absolute;top:260.07px;font-size:22.5px;line-height:22.5px;font-weight:normal;color:#444;white-space:nowrap;font-family:'Liberation Sans', sans-serif;-webkit-text-stroke:0.45px #444;left:940.75px;width:100px;text-align:center;">G</div>
<div style="position:absolute;top:260.07px;font-size:22.5px;line-height:22.5px;font-weight:normal;color:#444;white-space:nowrap;font-family:'Liberation Sans', sans-serif;-webkit-text-stroke:0.45px #444;left:1087.25px;width:100px;text-align:center;">H</div>
<div style="position:absolute;top:260.07px;font-size:22.5px;line-height:22.5px;font-weight:normal;color:#444;white-space:nowrap;font-family:'Liberation Sans', sans-serif;-webkit-text-stroke:0.45px #444;left:1233.75px;width:100px;text-align:center;">I</div>
<div style="position:absolute;top:260.07px;font-size:22.5px;line-height:22.5px;font-weight:normal;color:#444;white-space:nowrap;font-family:'Liberation Sans', sans-serif;-webkit-text-stroke:0.45px #444;left:1380.25px;width:100px;text-align:center;">J</div>
<div style="position:absolute;top:260.07px;font-size:22.5px;line-height:22.5px;font-weight:normal;color:#444;white-space:nowrap;font-family:'Liberation Sans', sans-serif;-webkit-text-stroke:0.45px #444;left:1526.75px;width:100px;text-align:center;">K</div>
<div style="position:absolute;top:260.07px;font-size:22.5px;line-height:22.5px;font-weight:normal;color:#444;white-space:nowrap;font-family:'Liberation Sans', sans-serif;-webkit-text-stroke:0.45px #444;left:1673.25px;width:100px;text-align:center;">L</div>
<div style="position:absolute;left:184.00px;top:291.00px;width:734.50px;height:3.00px;background:#3a7a4b;"></div>
<div style="position:absolute;top:301.58px;font-size:21.5px;line-height:21.5px;font-weight:normal;color:#444;white-space:nowrap;font-family:'Liberation Sans', sans-serif;-webkit-text-stroke:0.45px #444;left:-5.50px;width:40px;text-align:center;">1</div>
<div style="position:absolute;top:335.40px;font-size:21.5px;line-height:21.5px;font-weight:normal;color:#444;white-space:nowrap;font-family:'Liberation Sans', sans-serif;-webkit-text-stroke:0.45px #444;left:-5.50px;width:40px;text-align:center;">2</div>
<div style="position:absolute;top:369.22px;font-size:21.5px;line-height:21.5px;font-weight:normal;color:#444;white-space:nowrap;font-family:'Liberation Sans', sans-serif;-webkit-text-stroke:0.45px #444;left:-5.50px;width:40px;text-align:center;">3</div>
<div style="position:absolute;top:403.05px;font-size:21.5px;line-height:21.5px;font-weight:normal;color:#2d6b3e;white-space:nowrap;font-family:'Liberation Sans', sans-serif;-webkit-text-stroke:1.0px #2d6b3e;left:-5.50px;width:40px;text-align:center;">4</div>
<div style="position:absolute;top:436.86px;font-size:21.5px;line-height:21.5px;font-weight:normal;color:#444;white-space:nowrap;font-family:'Liberation Sans', sans-serif;-webkit-text-stroke:0.45px #444;left:-5.50px;width:40px;text-align:center;">5</div>
<div style="position:absolute;top:470.69px;font-size:21.5px;line-height:21.5px;font-weight:normal;color:#444;white-space:nowrap;font-family:'Liberation Sans', sans-serif;-webkit-text-stroke:0.45px #444;left:-5.50px;width:40px;text-align:center;">6</div>
<div style="position:absolute;top:504.51px;font-size:21.5px;line-height:21.5px;font-weight:normal;color:#444;white-space:nowrap;font-family:'Liberation Sans', sans-serif;-webkit-text-stroke:0.45px #444;left:-5.50px;width:40px;text-align:center;">7</div>
<div style="position:absolute;top:538.33px;font-size:21.5px;line-height:21.5px;font-weight:normal;color:#444;white-space:nowrap;font-family:'Liberation Sans', sans-serif;-webkit-text-stroke:0.45px #444;left:-5.50px;width:40px;text-align:center;">8</div>
<div style="position:absolute;top:572.14px;font-size:21.5px;line-height:21.5px;font-weight:normal;color:#444;white-space:nowrap;font-family:'Liberation Sans', sans-serif;-webkit-text-stroke:0.45px #444;left:-5.50px;width:40px;text-align:center;">9</div>
<div style="position:absolute;top:605.97px;font-size:21.5px;line-height:21.5px;font-weight:normal;color:#444;white-space:nowrap;font-family:'Liberation Sans', sans-serif;-webkit-text-stroke:0.45px #444;left:-5.50px;width:40px;text-align:center;">10</div>
<div style="position:absolute;top:639.79px;font-size:21.5px;line-height:21.5px;font-weight:normal;color:#444;white-space:nowrap;font-family:'Liberation Sans', sans-serif;-webkit-text-stroke:0.45px #444;left:-5.50px;width:40px;text-align:center;">11</div>
<div style="position:absolute;top:673.61px;font-size:21.5px;line-height:21.5px;font-weight:normal;color:#444;white-space:nowrap;font-family:'Liberation Sans', sans-serif;-webkit-text-stroke:0.45px #444;left:-5.50px;width:40px;text-align:center;">12</div>
<div style="position:absolute;top:707.43px;font-size:21.5px;line-height:21.5px;font-weight:normal;color:#444;white-space:nowrap;font-family:'Liberation Sans', sans-serif;-webkit-text-stroke:0.45px #444;left:-5.50px;width:40px;text-align:center;">13</div>
<div style="position:absolute;top:741.25px;font-size:21.5px;line-height:21.5px;font-weight:normal;color:#444;white-space:nowrap;font-family:'Liberation Sans', sans-serif;-webkit-text-stroke:0.45px #444;left:-5.50px;width:40px;text-align:center;">14</div>
<div style="position:absolute;top:775.07px;font-size:21.5px;line-height:21.5px;font-weight:normal;color:#444;white-space:nowrap;font-family:'Liberation Sans', sans-serif;-webkit-text-stroke:0.45px #444;left:-5.50px;width:40px;text-align:center;">15</div>
<div style="position:absolute;top:808.88px;font-size:21.5px;line-height:21.5px;font-weight:normal;color:#444;white-space:nowrap;font-family:'Liberation Sans', sans-serif;-webkit-text-stroke:0.45px #444;left:-5.50px;width:40px;text-align:center;">16</div>
<div style="position:absolute;top:842.71px;font-size:21.5px;line-height:21.5px;font-weight:normal;color:#444;white-space:nowrap;font-family:'Liberation Sans', sans-serif;-webkit-text-stroke:0.45px #444;left:-5.50px;width:40px;text-align:center;">17</div>
<div style="position:absolute;top:876.53px;font-size:21.5px;line-height:21.5px;font-weight:normal;color:#444;white-space:nowrap;font-family:'Liberation Sans', sans-serif;-webkit-text-stroke:0.45px #444;left:-5.50px;width:40px;text-align:center;">18</div>
<div style="position:absolute;top:910.35px;font-size:21.5px;line-height:21.5px;font-weight:normal;color:#444;white-space:nowrap;font-family:'Liberation Sans', sans-serif;-webkit-text-stroke:0.45px #444;left:-5.50px;width:40px;text-align:center;">19</div>
<div style="position:absolute;top:944.17px;font-size:21.5px;line-height:21.5px;font-weight:normal;color:#444;white-space:nowrap;font-family:'Liberation Sans', sans-serif;-webkit-text-stroke:0.45px #444;left:-5.50px;width:40px;text-align:center;">20</div>
<div style="position:absolute;top:977.99px;font-size:21.5px;line-height:21.5px;font-weight:normal;color:#444;white-space:nowrap;font-family:'Liberation Sans', sans-serif;-webkit-text-stroke:0.45px #444;left:-5.50px;width:40px;text-align:center;">21</div>
<div style="position:absolute;top:1011.81px;font-size:21.5px;line-height:21.5px;font-weight:normal;color:#444;white-space:nowrap;font-family:'Liberation Sans', sans-serif;-webkit-text-stroke:0.45px #444;left:-5.50px;width:40px;text-align:center;">22</div>
<div style="position:absolute;top:1045.62px;font-size:21.5px;line-height:21.5px;font-weight:normal;color:#444;white-space:nowrap;font-family:'Liberation Sans', sans-serif;-webkit-text-stroke:0.45px #444;left:-5.50px;width:40px;text-align:center;">23</div>
<div style="position:absolute;top:1079.45px;font-size:21.5px;line-height:21.5px;font-weight:normal;color:#444;white-space:nowrap;font-family:'Liberation Sans', sans-serif;-webkit-text-stroke:0.45px #444;left:-5.50px;width:40px;text-align:center;">24</div>
<div style="position:absolute;top:1113.27px;font-size:21.5px;line-height:21.5px;font-weight:normal;color:#444;white-space:nowrap;font-family:'Liberation Sans', sans-serif;-webkit-text-stroke:0.45px #444;left:-5.50px;width:40px;text-align:center;">25</div>
<div style="position:absolute;top:1147.09px;font-size:21.5px;line-height:21.5px;font-weight:normal;color:#444;white-space:nowrap;font-family:'Liberation Sans', sans-serif;-webkit-text-stroke:0.45px #444;left:-5.50px;width:40px;text-align:center;">26</div>
<div style="position:absolute;top:1180.91px;font-size:21.5px;line-height:21.5px;font-weight:normal;color:#444;white-space:nowrap;font-family:'Liberation Sans', sans-serif;-webkit-text-stroke:0.45px #444;left:-5.50px;width:40px;text-align:center;">27</div>
<div style="position:absolute;top:1214.72px;font-size:21.5px;line-height:21.5px;font-weight:normal;color:#444;white-space:nowrap;font-family:'Liberation Sans', sans-serif;-webkit-text-stroke:0.45px #444;left:-5.50px;width:40px;text-align:center;">28</div>
<div style="position:absolute;top:1248.55px;font-size:21.5px;line-height:21.5px;font-weight:normal;color:#444;white-space:nowrap;font-family:'Liberation Sans', sans-serif;-webkit-text-stroke:0.45px #444;left:-5.50px;width:40px;text-align:center;">29</div>
<div style="position:absolute;top:1282.37px;font-size:21.5px;line-height:21.5px;font-weight:normal;color:#444;white-space:nowrap;font-family:'Liberation Sans', sans-serif;-webkit-text-stroke:0.45px #444;left:-5.50px;width:40px;text-align:center;">30</div>
<div style="position:absolute;top:1316.18px;font-size:21.5px;line-height:21.5px;font-weight:normal;color:#444;white-space:nowrap;font-family:'Liberation Sans', sans-serif;-webkit-text-stroke:0.45px #444;left:-5.50px;width:40px;text-align:center;">31</div>
<div style="position:absolute;top:1350.01px;font-size:21.5px;line-height:21.5px;font-weight:normal;color:#444;white-space:nowrap;font-family:'Liberation Sans', sans-serif;-webkit-text-stroke:0.45px #444;left:-5.50px;width:40px;text-align:center;">32</div>
<div style="position:absolute;top:1383.83px;font-size:21.5px;line-height:21.5px;font-weight:normal;color:#444;white-space:nowrap;font-family:'Liberation Sans', sans-serif;-webkit-text-stroke:0.45px #444;left:-5.50px;width:40px;text-align:center;">33</div>
<div style="position:absolute;top:1417.64px;font-size:21.5px;line-height:21.5px;font-weight:normal;color:#444;white-space:nowrap;font-family:'Liberation Sans', sans-serif;-webkit-text-stroke:0.45px #444;left:-5.50px;width:40px;text-align:center;">34</div>
<div style="position:absolute;top:1451.47px;font-size:21.5px;line-height:21.5px;font-weight:normal;color:#444;white-space:nowrap;font-family:'Liberation Sans', sans-serif;-webkit-text-stroke:0.45px #444;left:-5.50px;width:40px;text-align:center;">35</div>
<div style="position:absolute;top:1485.29px;font-size:21.5px;line-height:21.5px;font-weight:normal;color:#444;white-space:nowrap;font-family:'Liberation Sans', sans-serif;-webkit-text-stroke:0.45px #444;left:-5.50px;width:40px;text-align:center;">36</div>
<div style="position:absolute;top:1519.11px;font-size:21.5px;line-height:21.5px;font-weight:normal;color:#444;white-space:nowrap;font-family:'Liberation Sans', sans-serif;-webkit-text-stroke:0.45px #444;left:-5.50px;width:40px;text-align:center;">37</div>
<div style="position:absolute;left:35.50px;top:394.96px;width:3.20px;height:34.82px;background:#2f6d40;"></div>
<div style="position:absolute;left:332.50px;top:399.46px;width:582.00px;height:25.82px;background:#c9c9c9;"></div>
<div style="position:absolute;left:477.00px;top:399.46px;width:2.00px;height:25.82px;background:#bdbdbd;"></div>
<div style="position:absolute;left:623.50px;top:399.46px;width:2.00px;height:25.82px;background:#bdbdbd;"></div>
<div style="position:absolute;left:770.00px;top:399.46px;width:2.00px;height:25.82px;background:#bdbdbd;"></div>
<div style="position:absolute;top:302.35px;font-size:21.3px;line-height:21.3px;font-weight:bold;color:#000;white-space:nowrap;font-family:'Liberation Sans', sans-serif;letter-spacing:-0.35px;-webkit-text-stroke:0.45px #000;left:43.50px;">Year</div>
<div style="position:absolute;top:302.35px;font-size:21.3px;line-height:21.3px;font-weight:bold;color:#000;white-space:nowrap;font-family:'Liberation Sans', sans-serif;letter-spacing:-0.35px;-webkit-text-stroke:0.45px #000;left:190.00px;">Score 1</div>
<div style="position:absolute;top:302.35px;font-size:21.3px;line-height:21.3px;font-weight:bold;color:#000;white-space:nowrap;font-family:'Liberation Sans', sans-serif;letter-spacing:-0.35px;-webkit-text-stroke:0.45px #000;left:336.50px;">Score 2</div>
<div style="position:absolute;top:302.35px;font-size:21.3px;line-height:21.3px;font-weight:bold;color:#000;white-space:nowrap;font-family:'Liberation Sans', sans-serif;letter-spacing:-0.35px;-webkit-text-stroke:0.45px #000;left:483.00px;">Score 3</div>
<div style="position:absolute;top:302.35px;font-size:21.3px;line-height:21.3px;font-weight:bold;color:#000;white-space:nowrap;font-family:'Liberation Sans', sans-serif;letter-spacing:-0.35px;-webkit-text-stroke:0.45px #000;left:629.50px;">Score 4</div>
<div style="position:absolute;top:302.35px;font-size:21.3px;line-height:21.3px;font-weight:bold;color:#000;white-space:nowrap;font-family:'Liberation Sans', sans-serif;letter-spacing:-0.35px;-webkit-text-stroke:0.45px #000;left:776.00px;">Score 5</div>
<div style="position:absolute;top:335.19px;font-size:22.5px;line-height:22.5px;font-weight:normal;color:#000;white-space:nowrap;font-family:'Liberation Sans', sans-serif;-webkit-text-stroke:0.45px #000;right:1621.00px;text-align:right;">2022</div>
<div style="position:absolute;top:335.19px;font-size:22.5px;line-height:22.5px;font-weight:normal;color:#000;white-space:nowrap;font-family:'Liberation Sans', sans-serif;-webkit-text-stroke:0.45px #000;right:1474.50px;text-align:right;">10</div>
<div style="position:absolute;top:335.19px;font-size:22.5px;line-height:22.5px;font-weight:normal;color:#000;white-space:nowrap;font-family:'Liberation Sans', sans-serif;-webkit-text-stroke:0.45px #000;right:1328.00px;text-align:right;">20</div>
<div style="position:absolute;top:335.19px;font-size:22.5px;line-height:22.5px;font-weight:normal;color:#000;white-space:nowrap;font-family:'Liberation Sans', sans-serif;-webkit-text-stroke:0.45px #000;right:1181.50px;text-align:right;">30</div>
<div style="position:absolute;top:335.19px;font-size:22.5px;line-height:22.5px;font-weight:normal;color:#000;white-space:nowrap;font-family:'Liberation Sans', sans-serif;-webkit-text-stroke:0.45px #000;right:1035.00px;text-align:right;">40</div>
<div style="position:absolute;top:335.19px;font-size:22.5px;line-height:22.5px;font-weight:normal;color:#000;white-space:nowrap;font-family:'Liberation Sans', sans-serif;-webkit-text-stroke:0.45px #000;right:888.50px;text-align:right;">50</div>
<div style="position:absolute;top:369.01px;font-size:22.5px;line-height:22.5px;font-weight:normal;color:#000;white-space:nowrap;font-family:'Liberation Sans', sans-serif;-webkit-text-stroke:0.45px #000;right:1621.00px;text-align:right;">2023</div>
<div style="position:absolute;top:369.01px;font-size:22.5px;line-height:22.5px;font-weight:normal;color:#000;white-space:nowrap;font-family:'Liberation Sans', sans-serif;-webkit-text-stroke:0.45px #000;right:1474.50px;text-align:right;">5</div>
<div style="position:absolute;top:369.01px;font-size:22.5px;line-height:22.5px;font-weight:normal;color:#000;white-space:nowrap;font-family:'Liberation Sans', sans-serif;-webkit-text-stroke:0.45px #000;right:1328.00px;text-align:right;">15</div>
<div style="position:absolute;top:369.01px;font-size:22.5px;line-height:22.5px;font-weight:normal;color:#000;white-space:nowrap;font-family:'Liberation Sans', sans-serif;-webkit-text-stroke:0.45px #000;right:1181.50px;text-align:right;">25</div>
<div style="position:absolute;top:369.01px;font-size:22.5px;line-height:22.5px;font-weight:normal;color:#000;white-space:nowrap;font-family:'Liberation Sans', sans-serif;-webkit-text-stroke:0.45px #000;right:1035.00px;text-align:right;">45</div>
<div style="position:absolute;top:369.01px;font-size:22.5px;line-height:22.5px;font-weight:normal;color:#000;white-space:nowrap;font-family:'Liberation Sans', sans-serif;-webkit-text-stroke:0.45px #000;right:888.50px;text-align:right;">60</div>
<div style="position:absolute;top:402.84px;font-size:22.5px;line-height:22.5px;font-weight:normal;color:#000;white-space:nowrap;font-family:'Liberation Sans', sans-serif;-webkit-text-stroke:0.45px #000;right:1474.50px;text-align:right;">-5</div>
<div style="position:absolute;top:402.84px;font-size:22.5px;line-height:22.5px;font-weight:normal;color:#000;white-space:nowrap;font-family:'Liberation Sans', sans-serif;-webkit-text-stroke:0.45px #000;right:1328.00px;text-align:right;">-2.5</div>
<div style="position:absolute;top:402.84px;font-size:22.5px;line-height:22.5px;font-weight:normal;color:#000;white-space:nowrap;font-family:'Liberation Sans', sans-serif;-webkit-text-stroke:0.45px #000;right:1181.50px;text-align:right;">-1.6666667</div>
<div style="position:absolute;top:402.84px;font-size:22.5px;line-height:22.5px;font-weight:normal;color:#000;white-space:nowrap;font-family:'Liberation Sans', sans-serif;-webkit-text-stroke:0.45px #000;right:1035.00px;text-align:right;">1.25</div>
<div style="position:absolute;top:402.84px;font-size:22.5px;line-height:22.5px;font-weight:normal;color:#000;white-space:nowrap;font-family:'Liberation Sans', sans-serif;-webkit-text-stroke:0.45px #000;right:888.50px;text-align:right;">2</div>
<div style="position:absolute;left:182.80px;top:392.26px;width:737.80px;height:39.42px;box-sizing:border-box;border:3.8px solid #3a7a4b;"></div>
<div style="position:absolute;left:912.50px;top:423.78px;width:10.00px;height:10.00px;background:#3a7a4b;border:1px solid #fff;"></div>
<div style="position:absolute;left:0.00px;top:1540.00px;width:1800.00px;height:47.00px;background:linear-gradient(#efefef,#e9e9e9);"></div>
<div style="position:absolute;left:0.00px;top:1540.00px;width:1800.00px;height:1.00px;background:#d0d0d0;"></div>
<div style="position:absolute;left:0.00px;top:1587.00px;width:1800.00px;height:2.00px;background:#bdbdbd;"></div>
<div style="position:absolute;left:253.00px;top:1540.00px;width:148.00px;height:41.00px;background:#fff;border-radius:0 0 6px 6px;box-shadow:0 1px 1px rgba(0,0,0,0.2);"></div>
<div style="position:absolute;left:103.00px;top:1544.00px;width:2.00px;height:38.00px;background:#d4d4d4;"></div>
<div style="position:absolute;left:472.00px;top:1544.00px;width:2.00px;height:38.00px;background:#d4d4d4;"></div>
<svg style="position:absolute;left:18px;top:1554px" width="60" height="20"><polygon points="13,0 13,19 0,9.5" fill="#b9b9b9"/><polygon points="44,0 44,19 57,9.5" fill="#b9b9b9"/></svg>
<div style="position:absolute;top:1553.00px;font-size:21.6px;line-height:21.6px;font-weight:normal;color:#444;white-space:nowrap;font-family:'Liberation Sans', sans-serif;-webkit-text-stroke:0.45px #444;left:142.80px;">Sheet1</div>
<div style="position:absolute;top:1553.49px;font-size:21px;line-height:21px;font-weight:bold;color:#2f8146;white-space:nowrap;font-family:'Liberation Sans', sans-serif;letter-spacing:0.85px;-webkit-text-stroke:0.45px #2f8146;left:289.30px;">Sheet2</div>
<div style="position:absolute;top:1547.70px;font-size:30px;line-height:30px;font-weight:bold;color:#555;white-space:nowrap;font-family:'Liberation Sans', sans-serif;-webkit-text-stroke:0.45px #555;left:418.00px;width:40px;text-align:center;">+</div>
<div style="position:absolute;left:0.00px;top:1589.00px;width:1800.00px;height:36.00px;background:#e0e0e0;"></div>
<div style="position:absolute;top:1599.34px;font-size:21.8px;line-height:21.8px;font-weight:normal;color:#555;white-space:nowrap;font-family:'Liberation Sans', sans-serif;-webkit-text-stroke:0.45px #555;left:37.60px;">Ready</div>
<svg style="position:absolute;left:139px;top:1592px" width="32" height="32">
<circle cx="7" cy="7" r="5" fill="#555"/>
<line x1="7" y1="10" x2="7" y2="24" stroke="#555" stroke-width="2.5"/>
<rect x="2" y="24" width="14" height="4" fill="#555"/>
<path d="M12,4 L26,4 Q28,4 28,8" fill="none" stroke="#555" stroke-width="2.5"/>
<line x1="22" y1="4" x2="22" y2="26" stroke="#555" stroke-width="2.5"/>
<path d="M14,27 L20,27 Q22,27 22,24" fill="none" stroke="#555" stroke-width="2.5"/>
</svg>
<svg style="position:absolute;left:200px;top:1594px" width="32" height="32">
<circle cx="13" cy="5.5" r="3.5" fill="none" stroke="#666" stroke-width="2"/>
<path d="M2,10 Q6,14 12,12 Q18,11 24,7" fill="none" stroke="#666" stroke-width="2" stroke-linecap="round"/>
<path d="M11.5,12.5 Q9,19 11,22 Q8,25 5,28" fill="none" stroke="#666" stroke-width="2" stroke-linecap="round"/>
<path d="M13,17 Q15,21 14,26" fill="none" stroke="#666" stroke-width="2" stroke-linecap="round"/>
<line x1="17" y1="19" x2="28" y2="29" stroke="#666" stroke-width="2"/>
<line x1="28" y1="19" x2="17" y2="29" stroke="#666" stroke-width="2"/>
</svg>
<div style="position:absolute;top:1597.66px;font-size:23.5px;line-height:23.5px;font-weight:normal;color:#555;white-space:nowrap;font-family:'Liberation Sans', sans-serif;letter-spacing:0.25px;-webkit-text-stroke:0.45px #555;left:236.40px;">Accessibility: Investigate</div>
<div style="position:absolute;top:1598.37px;font-size:23px;line-height:23px;font-weight:normal;color:#444;white-space:nowrap;font-family:'Liberation Sans', sans-serif;-webkit-text-stroke:0.45px #444;right:2.00px;text-align:right;">Count</div>
<div style="position:absolute;left:620.00px;top:501.00px;width:1157.00px;height:1118.00px;background:#f0edea;border-radius:18px;box-shadow:0 30px 72px 0 rgba(0,0,0,0.40), 0 0 0 1px rgba(0,0,0,0.12);"></div>
<div style="position:absolute;left:620.00px;top:554.00px;width:1157.00px;height:2.00px;background:#d6d3d0;"></div>
<div style="position:absolute;top:514.95px;font-size:25px;line-height:25px;font-weight:bold;color:#3a3a3a;white-space:nowrap;font-family:'Liberation Sans', sans-serif;-webkit-text-stroke:0.45px #3a3a3a;left:998.50px;width:400px;text-align:center;">Format Cells</div>
<div style="position:absolute;left:658.00px;top:595.00px;width:1081.00px;height:918.00px;background:#e4e4e0;border-radius:9px;box-shadow:0 0 0 1.5px rgba(255,255,255,0.45);"></div>
<div style="position:absolute;left:826.00px;top:577.00px;width:745.00px;height:40.00px;background:#dfddda;border-radius:9px;"></div>
<div style="position:absolute;left:828.00px;top:578.00px;width:135.00px;height:38.00px;background:#fff;border-radius:8px;box-shadow:0 1px 2px rgba(0,0,0,0.18);"></div>
<div style="position:absolute;left:1121.00px;top:587.00px;width:1.50px;height:20.00px;background:#c9c7c4;"></div>
<div style="position:absolute;left:1214.00px;top:587.00px;width:1.50px;height:20.00px;background:#c9c7c4;"></div>
<div style="position:absolute;left:1333.00px;top:587.00px;width:1.50px;height:20.00px;background:#c9c7c4;"></div>
<div style="position:absolute;left:1406.00px;top:587.00px;width:1.50px;height:20.00px;background:#c9c7c4;"></div>
<div style="position:absolute;top:584.95px;font-size:24.5px;line-height:24.5px;font-weight:normal;color:#222;white-space:nowrap;font-family:'Liberation Sans', sans-serif;letter-spacing:0.45px;-webkit-text-stroke:0.45px #222;left:852.00px;">Number</div>
<div style="position:absolute;top:584.95px;font-size:24.5px;line-height:24.5px;font-weight:normal;color:#222;white-space:nowrap;font-family:'Liberation Sans', sans-serif;letter-spacing:0.45px;-webkit-text-stroke:0.45px #222;left:985.00px;">Alignment</div>
<div style="position:absolute;top:584.95px;font-size:24.5px;line-height:24.5px;font-weight:normal;color:#222;white-space:nowrap;font-family:'Liberation Sans', sans-serif;letter-spacing:0.45px;-webkit-text-stroke:0.45px #222;left:1144.00px;">Font</div>
<div style="position:absolute;top:584.95px;font-size:24.5px;line-height:24.5px;font-weight:normal;color:#222;white-space:nowrap;font-family:'Liberation Sans', sans-serif;letter-spacing:0.45px;-webkit-text-stroke:0.45px #222;left:1237.30px;">Border</div>
<div style="position:absolute;top:584.95px;font-size:24.5px;line-height:24.5px;font-weight:normal;color:#222;white-space:nowrap;font-family:'Liberation Sans', sans-serif;letter-spacing:0.45px;-webkit-text-stroke:0.45px #222;left:1355.60px;">Fill</div>
<div style="position:absolute;top:584.95px;font-size:24.5px;line-height:24.5px;font-weight:normal;color:#222;white-space:nowrap;font-family:'Liberation Sans', sans-serif;letter-spacing:0.45px;-webkit-text-stroke:0.45px #222;left:1428.70px;">Protection</div>
<div style="position:absolute;top:637.15px;font-size:24.5px;line-height:24.5px;font-weight:normal;color:#222;white-space:nowrap;font-family:'Liberation Sans', sans-serif;letter-spacing:0.27px;-webkit-text-stroke:0.45px #222;left:694.60px;">Category:</div>
<div style="position:absolute;left:690.00px;top:669.00px;width:249.00px;height:630.00px;box-sizing:border-box;border:6px solid #85a887;border-radius:4px;background:#fff;"></div>
<div style="position:absolute;top:682.45px;font-size:24.5px;line-height:24.5px;font-weight:normal;color:#222;white-space:nowrap;font-family:'Liberation Sans', sans-serif;letter-spacing:0.15px;-webkit-text-stroke:0.45px #222;left:713.00px;">General</div>
<div style="position:absolute;top:718.17px;font-size:24.5px;line-height:24.5px;font-weight:normal;color:#222;white-space:nowrap;font-family:'Liberation Sans', sans-serif;letter-spacing:0.15px;-webkit-text-stroke:0.45px #222;left:713.00px;">Number</div>
<div style="position:absolute;top:753.89px;font-size:24.5px;line-height:24.5px;font-weight:normal;color:#222;white-space:nowrap;font-family:'Liberation Sans', sans-serif;letter-spacing:0.15px;-webkit-text-stroke:0.45px #222;left:713.00px;">Currency</div>
<div style="position:absolute;top:789.61px;font-size:24.5px;line-height:24.5px;font-weight:normal;color:#222;white-space:nowrap;font-family:'Liberation Sans', sans-serif;letter-spacing:0.15px;-webkit-text-stroke:0.45px #222;left:713.00px;">Accounting</div>
<div style="position:absolute;top:825.33px;font-size:24.5px;line-height:24.5px;font-weight:normal;color:#222;white-space:nowrap;font-family:'Liberation Sans', sans-serif;letter-spacing:0.15px;-webkit-text-stroke:0.45px #222;left:713.00px;">Date</div>
<div style="position:absolute;top:861.05px;font-size:24.5px;line-height:24.5px;font-weight:normal;color:#222;white-space:nowrap;font-family:'Liberation Sans', sans-serif;letter-spacing:0.15px;-webkit-text-stroke:0.45px #222;left:713.00px;">Time</div>
<div style="position:absolute;left:696.00px;top:890.00px;width:236.00px;height:36.00px;background:#2b6639;"></div>
<div style="position:absolute;top:896.77px;font-size:24.5px;line-height:24.5px;font-weight:normal;color:#fff;white-space:nowrap;font-family:'Liberation Sans', sans-serif;letter-spacing:0.25px;-webkit-text-stroke:0.45px #fff;left:713.00px;">Percentage</div>
<div style="position:absolute;top:932.49px;font-size:24.5px;line-height:24.5px;font-weight:normal;color:#222;white-space:nowrap;font-family:'Liberation Sans', sans-serif;letter-spacing:0.15px;-webkit-text-stroke:0.45px #222;left:713.00px;">Fraction</div>
<div style="position:absolute;top:968.21px;font-size:24.5px;line-height:24.5px;font-weight:normal;color:#222;white-space:nowrap;font-family:'Liberation Sans', sans-serif;letter-spacing:0.15px;-webkit-text-stroke:0.45px #222;left:713.00px;">Scientific</div>
<div style="position:absolute;top:1003.93px;font-size:24.5px;line-height:24.5px;font-weight:normal;color:#222;white-space:nowrap;font-family:'Liberation Sans', sans-serif;letter-spacing:0.15px;-webkit-text-stroke:0.45px #222;left:713.00px;">Text</div>
<div style="position:absolute;top:1039.65px;font-size:24.5px;line-height:24.5px;font-weight:normal;color:#222;white-space:nowrap;font-family:'Liberation Sans', sans-serif;letter-spacing:0.15px;-webkit-text-stroke:0.45px #222;left:713.00px;">Special</div>
<div style="position:absolute;top:1075.37px;font-size:24.5px;line-height:24.5px;font-weight:normal;color:#222;white-space:nowrap;font-family:'Liberation Sans', sans-serif;letter-spacing:0.15px;-webkit-text-stroke:0.45px #222;left:713.00px;">Custom</div>
<div style="position:absolute;top:637.65px;font-size:24.5px;line-height:24.5px;font-weight:normal;color:#222;white-space:nowrap;font-family:'Liberation Sans', sans-serif;-webkit-text-stroke:0.45px #222;left:967.00px;">Sample</div>
<div style="position:absolute;left:968.00px;top:674.00px;width:724.00px;height:73.00px;background:#e2dfdc;border-radius:7px;"></div>
<div style="position:absolute;top:699.15px;font-size:24.5px;line-height:24.5px;font-weight:normal;color:#222;white-space:nowrap;font-family:'Liberation Sans', sans-serif;letter-spacing:0.9px;-webkit-text-stroke:0.45px #222;left:988.00px;">-500.00%</div>
<div style="position:absolute;top:785.15px;font-size:24.5px;line-height:24.5px;font-weight:normal;color:#222;white-space:nowrap;font-family:'Liberation Sans', sans-serif;letter-spacing:0.25px;-webkit-text-stroke:0.45px #222;left:967.00px;">Decimal places:</div>
<div style="position:absolute;left:1160.00px;top:778.00px;width:56.00px;height:38.00px;background:#fff;box-shadow:0 1px 1px rgba(0,0,0,0.15);"></div>
<div style="position:absolute;top:785.15px;font-size:24.5px;line-height:24.5px;font-weight:normal;color:#222;white-space:nowrap;font-family:'Liberation Sans', sans-serif;-webkit-text-stroke:0.45px #222;left:1167.00px;">2</div>
<div style="position:absolute;left:1233.00px;top:777.00px;width:25.00px;height:39.00px;background:#fbfbfb;border-radius:7px;box-shadow:0 0 1px rgba(0,0,0,0.4);"></div>
<svg style="position:absolute;left:1233px;top:777px" width="25" height="39"><line x1="3" y1="19.5" x2="22" y2="19.5" stroke="#e6e6e6" stroke-width="1"/><polyline points="7,14 12.5,8.5 18,14" fill="none" stroke="#333" stroke-width="2.6"/><polyline points="7,25 12.5,30.5 18,25" fill="none" stroke="#333" stroke-width="2.6"/></svg>
<div style="position:absolute;top:1450.75px;font-size:24.5px;line-height:24.5px;font-weight:normal;color:#222;white-space:nowrap;font-family:'Liberation Sans', sans-serif;letter-spacing:0.49px;-webkit-text-stroke:0.45px #222;left:678.00px;">Percentage formats multiply the cell value by 100 and displays the result with a</div>
<div style="position:absolute;top:1480.65px;font-size:24.5px;line-height:24.5px;font-weight:normal;color:#222;white-space:nowrap;font-family:'Liberation Sans', sans-serif;letter-spacing:0.49px;-webkit-text-stroke:0.45px #222;left:678.00px;">percent symbol.</div>
<div style="position:absolute;left:1484.00px;top:1544.00px;width:117.00px;height:38.00px;background:#fff;border-radius:8px;box-shadow:0 0.5px 2px rgba(0,0,0,0.3);"></div>
<div style="position:absolute;top:1550.15px;font-size:24.5px;line-height:24.5px;font-weight:normal;color:#1a1a1a;white-space:nowrap;font-family:'Liberation Sans', sans-serif;-webkit-text-stroke:0.45px #1a1a1a;left:1484.00px;width:117px;text-align:center;">Cancel</div>
<div style="position:absolute;left:1623.00px;top:1544.00px;width:117.00px;height:37.00px;background:linear-gradient(#4a8a62,#2f6c45);border-radius:8px;"></div>
<div style="position:absolute;top:1550.15px;font-size:24.5px;line-height:24.5px;font-weight:normal;color:#fff;white-space:nowrap;font-family:'Liberation Sans', sans-serif;-webkit-text-stroke:0.45px #fff;left:1623.00px;width:117px;text-align:center;">OK</div>
<svg style="position:absolute;left:0;top:0" width="1800" height="1625">
<rect x="675.5" y="883.5" width="277.5" height="54.5" fill="none" stroke="#86e6b0" stroke-width="11.5"/>
<line x1="953" y1="938" x2="1620" y2="1490" stroke="#86e6b0" stroke-width="12"/>
<polygon points="1632,1465 1597,1507 1655,1518" fill="#86e6b0"/>
<ellipse cx="1684" cy="1559" rx="74.5" ry="37.5" fill="none" stroke="#86e6b0" stroke-width="11"/>
</svg>
</div></body></html>
